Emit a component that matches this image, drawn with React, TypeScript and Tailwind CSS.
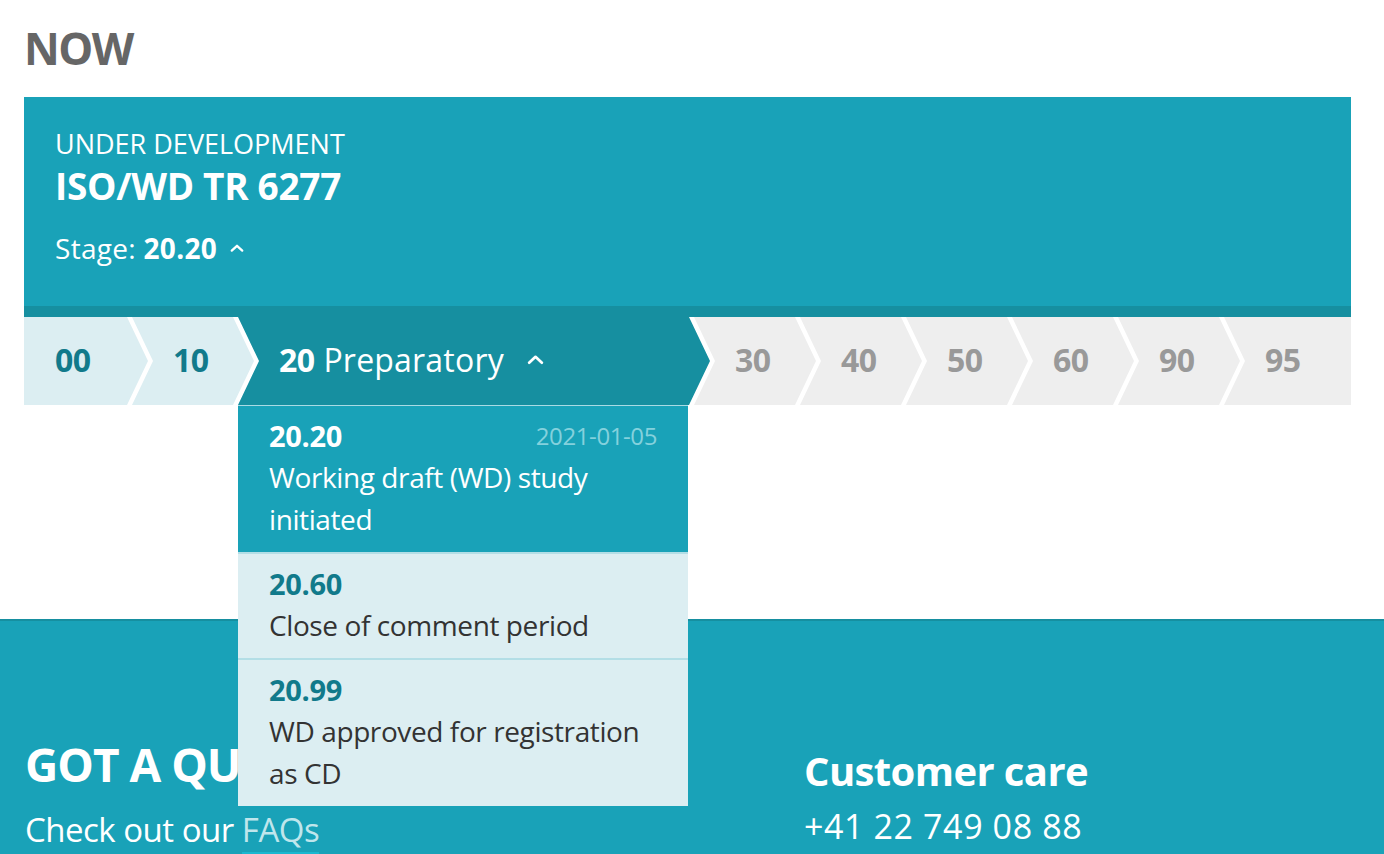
import { useState } from 'react';

const stages = [
  { code: '00', state: 'done' },
  { code: '10', state: 'done' },
  { code: '20', state: 'active', label: 'Preparatory' },
  { code: '30', state: 'todo' },
  { code: '40', state: 'todo' },
  { code: '50', state: 'todo' },
  { code: '60', state: 'todo' },
  { code: '90', state: 'todo' },
  { code: '95', state: 'todo' },
];

const substages = [
  { code: '20.20', date: '2021-01-05', text: 'Working draft (WD) study initiated', current: true },
  { code: '20.60', text: 'Close of comment period' },
  { code: '20.99', text: 'WD approved for registration as CD' },
];

function ChevronUp({ className }: { className?: string }) {
  return (
    <svg viewBox="0 0 16 10" className={className} fill="none" stroke="currentColor" strokeWidth={2.6} strokeLinecap="round" strokeLinejoin="round">
      <polyline points="2,8 8,2.5 14,8" />
    </svg>
  );
}

export default function App() {
  const [open, setOpen] = useState(true);

  return (
    <div className="min-h-screen bg-white font-['Open_Sans',sans-serif] overflow-hidden">
      {/* top section */}
      <div className="h-[619px] pl-[24px] pt-[18px]">
        <h2 className="text-[44px] leading-[60px] font-bold text-[#666666] tracking-[-1.5px]">NOW</h2>

        <div className="w-[1327px] mt-[19px]">
          <div className="bg-[#19a2b8] px-[31px] pt-[26px] pb-[43px] text-white">
            <div className="text-[27px] leading-[42px] font-normal tracking-[0px]">UNDER DEVELOPMENT</div>
            <div className="text-[37px] leading-[42px] font-bold tracking-[-0.3px]">ISO/WD TR 6277</div>
            <button
              onClick={() => setOpen(!open)}
              className="mt-[26px] flex items-center text-[28px] leading-[30px] tracking-[0.3px]"
            >
              Stage:&nbsp;<span className="font-bold">20.20</span>
              <ChevronUp className="w-[14px] h-[10px] ml-[13px]" />
            </button>
          </div>
          <div className="h-[11px] bg-[#168fa0]" />

          {/* stage chevrons */}
          <div className="relative">
            <div className="flex h-[88px]">
              {stages.map((s, i) => {
                const first = i === 0;
                const last = i === stages.length - 1;
                const clip = first
                  ? '[clip-path:polygon(0_0,calc(100%-21px)_0,100%_50%,calc(100%-21px)_100%,0_100%)]'
                  : last
                  ? '[clip-path:polygon(0_0,100%_0,100%_100%,0_100%,21px_50%)]'
                  : '[clip-path:polygon(0_0,calc(100%-21px)_0,100%_50%,calc(100%-21px)_100%,0_100%,21px_50%)]';
                const color =
                  s.state === 'done'
                    ? 'bg-[#dceef2] text-[#117a8b]'
                    : s.state === 'active'
                    ? 'bg-[#168fa0] text-white'
                    : 'bg-[#eeeeee] text-[#999999]';
                const width = first
                  ? 'w-[124px] shrink-0'
                  : last
                  ? 'flex-1'
                  : s.state === 'active'
                  ? 'w-[472px] shrink-0'
                  : 'w-[122px] shrink-0';
                return (
                  <div
                    key={s.code}
                    className={`${clip} ${color} ${width} ${first ? 'pl-[31px]' : '-ml-[16px] pl-[41px]'} flex items-center pb-[3px]`}
                  >
                    <span className="text-[32px] font-bold tracking-[-0.6px]">{s.code}</span>
                    {s.label && (
                      <>
                        <span className="text-[32px] ml-[9px] tracking-[0.2px]">{s.label}</span>
                        <ChevronUp className="w-[17px] h-[11px] ml-[23px]" />
                      </>
                    )}
                  </div>
                );
              })}
            </div>

            {/* substage dropdown */}
            {open && (
              <div className="absolute left-[214px] top-full w-[450px] z-10 border-t border-[#a9dbe4]">
                {substages.map((s, i) => (
                  <div
                    key={s.code}
                    className={`px-[31px] pt-[10px] pb-[12px] ${
                      s.current ? 'bg-[#19a2b8] text-white' : 'bg-[#dceef2] text-[#333333]'
                    } ${i > 0 ? 'border-t-2 border-[#b3dee6]' : ''}`}
                  >
                    <div className="flex justify-between items-center">
                      <span className={`text-[29px] leading-[40px] font-bold tracking-[-0.3px] ${s.current ? '' : 'text-[#117a8b]'}`}>
                        {s.code}
                      </span>
                      {s.date && <span className="text-[24px] text-[#84d1dd] tracking-[-0.4px]">{s.date}</span>}
                    </div>
                    <div className="text-[28px] leading-[42px] tracking-[-0.4px]">{s.text}</div>
                  </div>
                ))}
              </div>
            )}
          </div>
        </div>
      </div>

      {/* footer */}
      <footer className="bg-[#19a2b8] border-t-2 border-[#168fa0] h-[235px] text-white">
        <div className="grid grid-cols-[779px_1fr] pl-[25px] pt-[115px]">
          <div>
            <h3 className="text-[46px] leading-[56px] font-bold tracking-[-1px]">GOT A QUESTION?</h3>
            <p className="mt-[18px] text-[33px] leading-[40px] tracking-[-0.5px]">
              Check out our{' '}
              <a href="#" className="text-[#bfe6ec] border-b-[3px] border-[#1ab8d0]">FAQs</a>
            </p>
          </div>
          <div className="pt-[9px]">
            <h3 className="text-[40px] leading-[52px] font-bold tracking-[-0.6px]">Customer care</h3>
            <p className="mt-[9px] text-[34px] leading-[40px] tracking-[0.6px]">+41 22 749 08 88</p>
          </div>
        </div>
      </footer>
    </div>
  );
}
